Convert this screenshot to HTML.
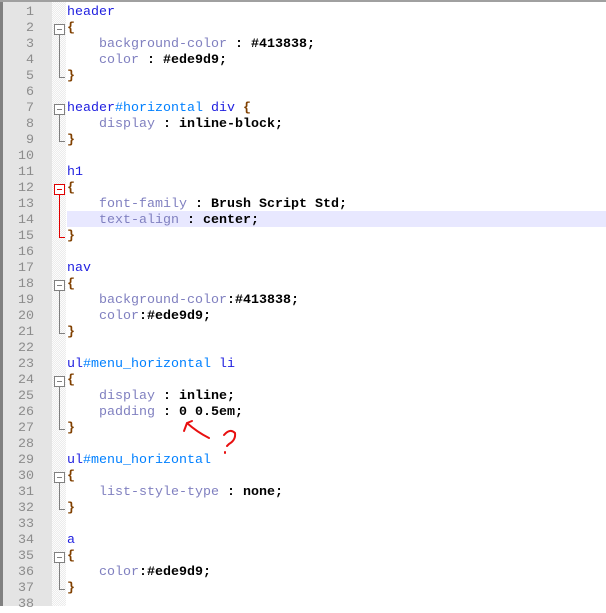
<!DOCTYPE html>
<html><head><meta charset="utf-8"><style>
body{margin:0;width:606px;height:606px;overflow:hidden;background:#fff;position:relative;font-family:"Liberation Mono",monospace;font-size:13.33px}
#bt{position:absolute;left:0;top:0;width:606px;height:2px;background:#a0a0a0}
#bl{position:absolute;left:0;top:0;width:3px;height:606px;background:#808080}
#num{position:absolute;left:3px;top:2px;width:49px;height:604px;background:#e4e4e4}
#fold{position:absolute;left:52px;top:2px;width:14px;height:604px;background-color:#f4f4f4;background-image:repeating-conic-gradient(#ececec 0 25%,#fcfcfc 0 50%);background-size:2px 2px}
.l{position:absolute;left:0;height:16px;line-height:16px;white-space:pre;width:606px}
.n,.t{top:2px}
.n{position:absolute;left:3px;width:31px;text-align:right;color:#8c8c8c}
.t{position:absolute;left:67px}
.k{color:#2020e0}.i{color:#0080ff}.p{color:#8080c0}.v{color:#000;font-weight:bold}.b{color:#804000;font-weight:bold}.o{color:#000;font-weight:bold}
.hl{position:absolute;left:67px;top:211px;width:539px;height:16px;background:#e8e8ff}
.box{position:absolute;left:54px;border:1px solid #808080;background:#fff;box-sizing:border-box;width:11px;height:11px}
.box::after{content:"";position:absolute;left:2px;top:4px;width:5px;height:1px;background:#808080}
.vl{position:absolute;left:59px;width:1px;background:#808080}
.end{position:absolute;left:59px;width:6px;height:1px;background:#808080}
.r{border-color:#e00000!important;background:#e00000!important}
.box.r{background:#fff!important}
.box.r::after{background:#e00000}
</style></head><body>
<div id="num"></div><div id="fold"></div><div id="bl"></div><div id="bt"></div>
<div class="hl"></div>

<div class="l" style="top:3px"><span class="n">1</span><span class="t"><span class="k">header</span></span></div>
<div class="l" style="top:19px"><span class="n">2</span><span class="t"><span class="b">{</span></span></div>
<div class="l" style="top:35px"><span class="n">3</span><span class="t">    <span class="p">background-color</span><span class="o"> : </span><span class="v">#413838;</span></span></div>
<div class="l" style="top:51px"><span class="n">4</span><span class="t">    <span class="p">color</span><span class="o"> : </span><span class="v">#ede9d9;</span></span></div>
<div class="l" style="top:67px"><span class="n">5</span><span class="t"><span class="b">}</span></span></div>
<div class="l" style="top:83px"><span class="n">6</span></div>
<div class="l" style="top:99px"><span class="n">7</span><span class="t"><span class="k">header</span><span class="i">#horizontal</span> <span class="k">div</span> <span class="b">{</span></span></div>
<div class="l" style="top:115px"><span class="n">8</span><span class="t">    <span class="p">display</span><span class="o"> : </span><span class="v">inline-block;</span></span></div>
<div class="l" style="top:131px"><span class="n">9</span><span class="t"><span class="b">}</span></span></div>
<div class="l" style="top:147px"><span class="n">10</span></div>
<div class="l" style="top:163px"><span class="n">11</span><span class="t"><span class="k">h1</span></span></div>
<div class="l" style="top:179px"><span class="n">12</span><span class="t"><span class="b">{</span></span></div>
<div class="l" style="top:195px"><span class="n">13</span><span class="t">    <span class="p">font-family</span><span class="o"> : </span><span class="v">Brush Script Std;</span></span></div>
<div class="l" style="top:211px"><span class="n">14</span><span class="t">    <span class="p">text-align</span><span class="o"> : </span><span class="v">center;</span></span></div>
<div class="l" style="top:227px"><span class="n">15</span><span class="t"><span class="b">}</span></span></div>
<div class="l" style="top:243px"><span class="n">16</span></div>
<div class="l" style="top:259px"><span class="n">17</span><span class="t"><span class="k">nav</span></span></div>
<div class="l" style="top:275px"><span class="n">18</span><span class="t"><span class="b">{</span></span></div>
<div class="l" style="top:291px"><span class="n">19</span><span class="t">    <span class="p">background-color</span><span class="o">:</span><span class="v">#413838;</span></span></div>
<div class="l" style="top:307px"><span class="n">20</span><span class="t">    <span class="p">color</span><span class="o">:</span><span class="v">#ede9d9;</span></span></div>
<div class="l" style="top:323px"><span class="n">21</span><span class="t"><span class="b">}</span></span></div>
<div class="l" style="top:339px"><span class="n">22</span></div>
<div class="l" style="top:355px"><span class="n">23</span><span class="t"><span class="k">ul</span><span class="i">#menu_horizontal</span> <span class="k">li</span></span></div>
<div class="l" style="top:371px"><span class="n">24</span><span class="t"><span class="b">{</span></span></div>
<div class="l" style="top:387px"><span class="n">25</span><span class="t">    <span class="p">display</span><span class="o"> : </span><span class="v">inline;</span></span></div>
<div class="l" style="top:403px"><span class="n">26</span><span class="t">    <span class="p">padding</span><span class="o"> : </span><span class="v">0 0.5em;</span></span></div>
<div class="l" style="top:419px"><span class="n">27</span><span class="t"><span class="b">}</span></span></div>
<div class="l" style="top:435px"><span class="n">28</span></div>
<div class="l" style="top:451px"><span class="n">29</span><span class="t"><span class="k">ul</span><span class="i">#menu_horizontal</span></span></div>
<div class="l" style="top:467px"><span class="n">30</span><span class="t"><span class="b">{</span></span></div>
<div class="l" style="top:483px"><span class="n">31</span><span class="t">    <span class="p">list-style-type</span><span class="o"> : </span><span class="v">none;</span></span></div>
<div class="l" style="top:499px"><span class="n">32</span><span class="t"><span class="b">}</span></span></div>
<div class="l" style="top:515px"><span class="n">33</span></div>
<div class="l" style="top:531px"><span class="n">34</span><span class="t"><span class="k">a</span></span></div>
<div class="l" style="top:547px"><span class="n">35</span><span class="t"><span class="b">{</span></span></div>
<div class="l" style="top:563px"><span class="n">36</span><span class="t">    <span class="p">color</span><span class="o">:</span><span class="v">#ede9d9;</span></span></div>
<div class="l" style="top:579px"><span class="n">37</span><span class="t"><span class="b">}</span></span></div>
<div class="l" style="top:595px"><span class="n">38</span></div>

<div class="vl" style="top:32px;height:45px"></div><div class="end" style="top:77px"></div><div class="box" style="top:24px"></div>
<div class="vl" style="top:112px;height:29px"></div><div class="end" style="top:141px"></div><div class="box" style="top:104px"></div>
<div class="vl r" style="top:192px;height:45px"></div><div class="end r" style="top:237px"></div><div class="box r" style="top:184px"></div>
<div class="vl" style="top:288px;height:45px"></div><div class="end" style="top:333px"></div><div class="box" style="top:280px"></div>
<div class="vl" style="top:384px;height:45px"></div><div class="end" style="top:429px"></div><div class="box" style="top:376px"></div>
<div class="vl" style="top:480px;height:29px"></div><div class="end" style="top:509px"></div><div class="box" style="top:472px"></div>
<div class="vl" style="top:560px;height:29px"></div><div class="end" style="top:589px"></div><div class="box" style="top:552px"></div>

<svg style="position:absolute;left:0;top:0" width="606" height="606">
<g fill="none" stroke="#e81010" stroke-width="2" stroke-linecap="round" stroke-linejoin="round">
<path d="M184 431 L187 423 L192 421"/>
<path d="M187 423 Q197 432 209 438"/>
<path d="M224 435 Q230 428 235 433 Q236 440 229 444 L227 446"/>
<path d="M225 452 L225 453"/>
</g></svg>
</body></html>
